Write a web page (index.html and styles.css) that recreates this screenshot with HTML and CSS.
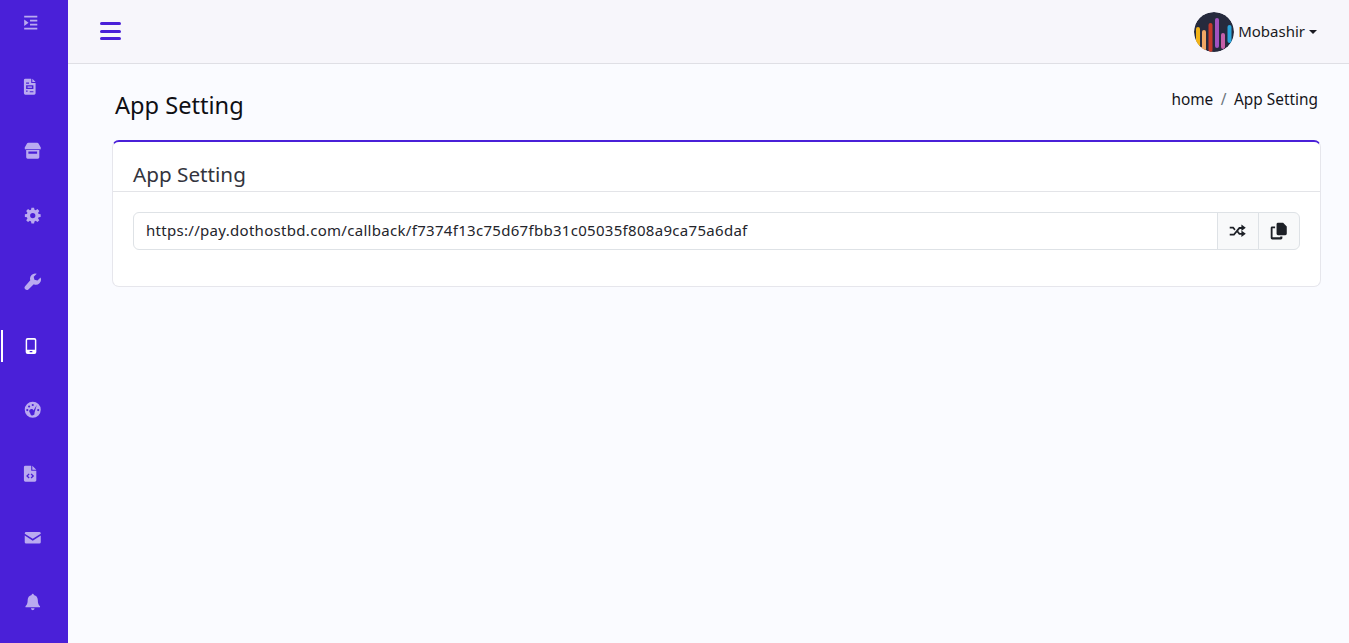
FILE: index.html
```html
<!DOCTYPE html>
<html lang="en">

<head>
  <meta charset="UTF-8" />
  <title>App Setting</title>
  <meta name="viewport" content="width=device-width, initial-scale=1" />
  <link rel="stylesheet" href="styles.css">
</head>

<body>
  <aside class="sidebar">
    <a class="side-link side-toggle">
      <svg class="side-icon" viewBox="0 0 24 24"><path d="M3 2.500h18v2.200H3zM11 8h10v2.200H11zM11 13.500h10v2.200H11zM3 19h18v2.200H3zM3 7.500l6 4.500-6 4.500z" /></svg>
    </a>
    <a class="side-link side-file">
      <svg class="side-icon" viewBox="0 0 24 24"><path fill-rule="evenodd" d="M6 1h8v6h6v14a2 2 0 0 1-2 2H6a2 2 0 0 1-2-2V3a2 2 0 0 1 2-2zM7 6v2h4V6zm0 4v5h10v-5zm2 1.500h6v2H9zM7 17v2h2v-2zm5 1v1.500h5V18zM15.500 1 20 5.500h-4.500z" /></svg>
    </a>
    <a class="side-link">
      <svg class="side-icon" viewBox="0 0 24 24"><path fill-rule="evenodd" d="M6 1h12c1 0 1.700.5 2.100 1.300L23 7.500V9a2.500 2.500 0 0 1-2 2.400V21a2 2 0 0 1-2 2H5a2 2 0 0 1-2-2v-9.600A2.500 2.500 0 0 1 1 9V7.500l2.900-5.200C4.300 1.500 5 1 6 1zM6 13v3h12v-3zM1.500 10h21v1h-21z" /></svg>
    </a>
    <a class="side-link side-gear">
      <svg class="side-icon" viewBox="0 0 24 24"><path fill-rule="evenodd" d="M10 1h4l.6 3.200 1.900.8L19.200 3.100 22 5.900l-1.900 2.700.8 1.900L24 11v4l-3.100.5-.8 1.900L22 20.100 19.200 22.900 16.500 21l-1.900.8L14 25h-4l-.6-3.200-1.900-.8-2.700 1.900L2 20.100l1.900-2.700-.8-1.900L0 15v-4l3.100-.5.800-1.900L2 5.900 4.800 3.100 7.500 5l1.900-.8zM12 9a4 4 0 1 0 0 8 4 4 0 0 0 0-8z" transform="translate(1.200 .1) scale(.9)" /></svg>
    </a>
    <a class="side-link side-wrench">
      <svg class="side-icon" viewBox="0 0 24 24"><path d="M22.700 6.200 18.500 10.400l-4.200-1-1-4.200 4.200-4.200a7 7 0 0 0-8.900 8.800L1.500 18a3.200 3.200 0 0 0 4.500 4.500l7.400-7.100a7 7 0 0 0 9.300-9.200z" /></svg>
    </a>
    <a class="side-link active">
      <svg class="side-icon" viewBox="0 0 24 24"><path fill-rule="evenodd" d="M7 0h10a3 3 0 0 1 3 3v18a3 3 0 0 1-3 3H7a3 3 0 0 1-3-3V3a3 3 0 0 1 3-3zm0 2.500a.8.800 0 0 0-.8.800v14.200h11.600V3.300a.8.800 0 0 0-.8-.8zM10 19.500v2h4v-2z" /></svg>
    </a>
    <a class="side-link">
      <svg class="side-icon" viewBox="0 0 24 24"><path fill-rule="evenodd" d="M12 1a11 11 0 1 1 0 22 11 11 0 0 1 0-22zm0 3a1.500 1.500 0 1 0 0 3 1.500 1.500 0 0 0 0-3zM7 6a1.500 1.500 0 1 0 0 3 1.500 1.500 0 0 0 0-3zm-2.500 5a1.500 1.500 0 1 0 0 3 1.500 1.500 0 0 0 0-3zm15 0a1.500 1.500 0 1 0 0 3 1.500 1.500 0 0 0 0-3zm-2-5.500L13 13a3 3 0 1 0-4.500 3.400 3 3 0 0 0 3.900 3.200 3 3 0 0 0 2-3.600z" /></svg>
    </a>
    <a class="side-link side-file">
      <svg class="side-icon" viewBox="0 0 24 24"><path fill-rule="evenodd" d="M6 1h8v7h7v13a2 2 0 0 1-2 2H6a2 2 0 0 1-2-2V3a2 2 0 0 1 2-2zm4.500 10.500L7 15l3.500 3.500 1.300-1.300L9.600 15l2.200-2.200zm4 0-1.300 1.300 2.200 2.200-2.200 2.200 1.300 1.300L18 15zM15.500 1l5.500 5.500h-5.500z" /></svg>
    </a>
    <a class="side-link">
      <svg class="side-icon" viewBox="0 0 24 24"><path d="M3 4h18a2 2 0 0 1 2 2v.5l-11 7-11-7V6a2 2 0 0 1 2-2zM1 9l11 7 11-7v9a2 2 0 0 1-2 2H3a2 2 0 0 1-2-2z" /></svg>
    </a>
    <a class="side-link">
      <svg class="side-icon" viewBox="0 0 24 24"><path d="M12 1a1.500 1.500 0 0 1 1.500 1.600C17 3.300 19 6.200 19 10c0 5 1.300 6.300 3 8v1.500H2V18c1.700-1.700 3-3 3-8 0-3.800 2-6.700 5.500-7.400A1.500 1.500 0 0 1 12 1zM9.500 21h5a2.500 2.500 0 0 1-5 0z" /></svg>
    </a>
  </aside>

  <div class="page">
    <header class="topbar">
      <a class="menu-btn">
        <span></span>
        <span></span>
        <span></span>
      </a>
      <a class="user">
        <svg class="avatar" viewBox="0 0 40 40">
          <circle cx="20" cy="20" r="20" fill="#262a3d" />
          <rect x="2" y="15" width="4" height="20" rx="2" fill="#f2b318" />
          <rect x="8" y="18" width="4" height="21" rx="2" fill="#f0a765" />
          <rect x="14.500" y="11" width="4" height="29" rx="2" fill="#c8392b" />
          <rect x="21" y="6" width="4" height="30" rx="2" fill="#a252c0" />
          <rect x="27" y="21" width="4" height="16" rx="2" fill="#c560a8" />
          <rect x="33.500" y="13" width="4" height="18" rx="2" fill="#2aa5dc" />
        </svg>
        <span class="user-name">Mobashir</span>
        <i class="caret"></i>
      </a>
    </header>

    <main class="content">
      <div class="page-head">
        <h1>App Setting</h1>
        <ol class="crumbs">
          <li>home</li>
          <li class="sep">/</li>
          <li>App Setting</li>
        </ol>
      </div>

      <section class="card">
        <h2 class="card-title">App Setting</h2>
        <div class="card-body">
          <div class="input-group">
            <input type="text" value="https://pay.dothostbd.com/callback/f7374f13c75d67fbb31c05035f808a9ca75a6daf">
            <button class="addon">
              <svg viewBox="0 0 24 24"><path d="M17 3.500 23 8l-6 4.500V9.500h-2.200l-7.500 9H1V16h5.200l7.500-9H17zM1 6.500h5.200l2.800 3.400-1.600 1.900L5.100 9H1zM17 11.500l6 4.500-6 4.500v-3h-3.300l-2.700-3.300 1.600-1.900 2.300 2.700H17z" /></svg>
            </button>
            <button class="addon">
              <svg viewBox="0 0 24 24"><path fill-rule="evenodd" d="M11 1h7l5 5v10a2 2 0 0 1-2 2H11a2 2 0 0 1-2-2V3a2 2 0 0 1 2-2zM3 6h4v2.500H3.500v12.500H14v-1h3v2a2 2 0 0 1-2 2H3a2 2 0 0 1-2-2V8a2 2 0 0 1 2-2z" /></svg>
            </button>
          </div>
        </div>
      </section>
    </main>
  </div>
</body>

</html>
```

FILE: styles.css
```css
* {
  box-sizing: border-box;
}

body {
  margin: 0;
  height: 643px;
  overflow: hidden;
  display: flex;
  font-family: 'Noto Sans', sans-serif;
  background-color: #fafbff;
  color: #14141a;
}

.sidebar {
  width: 68px;
  flex-shrink: 0;
  background-color: #4a20d8;
  display: flex;
  flex-direction: column;
  align-items: stretch;
}

.side-link {
  height: 64px;
  display: flex;
  align-items: center;
  padding-left: 24px;
  position: relative;
  flex-shrink: 0;
}

.side-toggle {
  height: 46px;
  margin-bottom: 9px;
  padding-left: 22px;
}

.side-file {
  padding-left: 21px;
}

.side-gear {
  margin-top: 1px;
}

.side-wrench {
  margin-top: 2px;
}

.side-icon {
  width: 17.5px;
  height: 17.5px;
  fill: rgba(255, 255, 255, 0.62);
}

.side-link.active {
  padding-left: 23px;
}

.side-link.active .side-icon {
  width: 16px;
  height: 16px;
  fill: #fff;
}

.side-link.active::before {
  content: '';
  position: absolute;
  left: 1px;
  top: 16px;
  width: 2px;
  height: 32px;
  background-color: #fff;
}

.page {
  flex: 1;
  min-width: 0;
}

.topbar {
  height: 64px;
  background-color: #f7f6fb;
  border-bottom: 1px solid #dfdfe5;
  display: flex;
  align-items: center;
  justify-content: space-between;
  padding: 0 32px;
}

.menu-btn {
  display: flex;
  flex-direction: column;
  gap: 4.5px;
  width: 21px;
  padding-bottom: 1px;
}

.menu-btn span {
  height: 3px;
  border-radius: 2px;
  background-color: #4a20d8;
}

.user {
  display: flex;
  align-items: center;
  font-size: 15px;
  color: #1a1a22;
}

.user-name {
  padding-bottom: 2px;
}

.avatar {
  width: 40px;
  height: 40px;
  margin-right: 4px;
  border-radius: 50%;
}

.caret {
  margin-left: 4px;
  border-top: 4px solid #1a1a22;
  border-left: 4px solid transparent;
  border-right: 4px solid transparent;
}

.content {
  padding: 0 28px 0 44px;
}

.page-head {
  height: 76px;
  display: flex;
  justify-content: space-between;
  padding: 23px 3px 0 3px;
}

.page-head h1 {
  margin: 0;
  font-size: 23.6px;
  line-height: 37px;
  font-weight: 400;
  color: #0f0f14;
}

.crumbs {
  display: flex;
  gap: 7.5px;
  margin: 1px 0 0;
  padding: 0;
  list-style: none;
  font-size: 15.4px;
  line-height: 24px;
}

.crumbs .sep {
  color: #6c757d;
}

.card {
  background-color: #fff;
  border: 1px solid #e6e6ec;
  border-top: 2px solid #4a20d8;
  border-radius: 7px;
  height: 147px;
}

.card-title {
  margin: 0;
  height: 50px;
  padding: 18px 20px 0;
  font-size: 20.7px;
  line-height: 28px;
  font-weight: 400;
  color: #33343d;
  border-bottom: 1px solid #e3e4e8;
}

.card-body {
  padding: 20px;
}

.input-group {
  display: flex;
  height: 38px;
}

.input-group input {
  flex: 1;
  min-width: 0;
  padding: 0 12px 2px;
  font-family: inherit;
  font-size: 15px;
  letter-spacing: 0.3px;
  color: #24252c;
  background-color: #fff;
  border: 1px solid #dee2e6;
  border-radius: 6px 0 0 6px;
}

.addon {
  width: 42px;
  margin-left: -1px;
  padding: 0;
  display: flex;
  align-items: center;
  justify-content: center;
  background-color: #f8f9fa;
  border: 1px solid #dee2e6;
}

.addon:last-child {
  border-radius: 0 6px 6px 0;
}

.addon svg {
  width: 17.5px;
  height: 17.5px;
  fill: #1d2027;
}
```
